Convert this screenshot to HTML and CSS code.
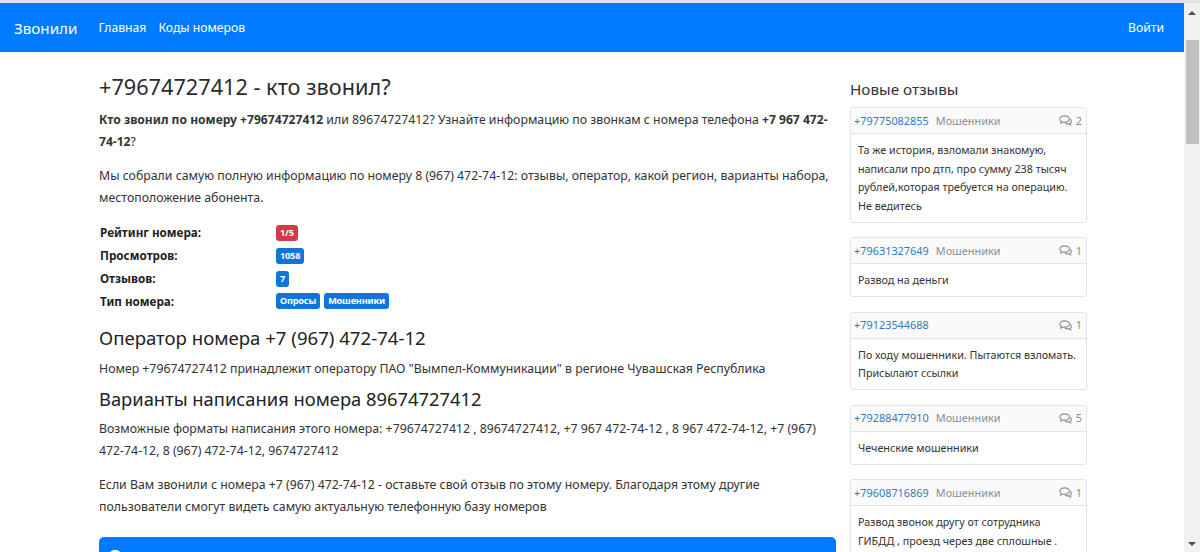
FILE: index.html
```html
<!DOCTYPE html>
<html lang="ru">
<head>
<meta charset="utf-8">
<title>+79674727412 - кто звонил?</title>
<link rel="stylesheet" href="styles.css">
</head>
<body>
<svg class="sprite" width="0" height="0"><defs>
<symbol id="chat" viewBox="0 0 14 12"><path d="M6 1C3 1 .8 2.500.8 4.400c0 1 .6 1.900 1.600 2.600L1.800 8.800 4 7.600c.6.1 1.300.2 2 .2 3 0 5.200-1.500 5.200-3.400S9 1 6 1z" fill="none" stroke="currentColor" stroke-width="1.200"/><path d="M12 4.500c1 .6 1.400 1.400 1.400 2.300 0 .9-.5 1.700-1.300 2.200l.5 1.800-2.200-1.200c-1.500.2-3-.1-4-.9" fill="none" stroke="currentColor" stroke-width="1.200"/></symbol>
</defs></svg>
<div class="window">
  <div class="page">
    <nav class="navbar">
      <a class="brand" href="#">Звонили</a>
      <a class="nav-link" href="#">Главная</a>
      <a class="nav-link" href="#">Коды номеров</a>
      <a class="nav-link login" href="#">Войти</a>
    </nav>
    <div class="content">
      <main class="main">
        <h1>+79674727412 - кто звонил?</h1>
        <p class="intro"><b>Кто звонил по номеру +79674727412</b> или 89674727412? Узнайте информацию по звонкам с номера телефона <b>+7 967 472-74-12</b>?</p>
        <p class="para tight">Мы собрали самую полную информацию по номеру 8 (967) 472-74-12: отзывы, оператор, какой регион, варианты набора, местоположение абонента.</p>
        <div class="facts">
          <b>Рейтинг номера:</b><div><span class="badge red">1/5</span></div>
          <b>Просмотров:</b><div><span class="badge">1058</span></div>
          <b>Отзывов:</b><div><span class="badge">7</span></div>
          <b>Тип номера:</b><div class="badges"><span class="badge">Опросы</span><span class="badge">Мошенники</span></div>
        </div>
        <h2>Оператор номера +7 (967) 472-74-12</h2>
        <p class="line">Номер +79674727412 принадлежит оператору ПАО "Вымпел-Коммуникации" в регионе Чувашская Республика</p>
        <h2 class="second">Варианты написания номера 89674727412</h2>
        <p class="para">Возможные форматы написания этого номера: +79674727412 , 89674727412, +7 967 472-74-12 , 8 967 472-74-12, +7 (967) 472-74-12, 8 (967) 472-74-12, 9674727412</p>
        <p class="para">Если Вам звонили с номера +7 (967) 472-74-12 - оставьте свой отзыв по этому номеру. Благодаря этому другие пользователи смогут видеть самую актуальную телефонную базу номеров</p>
        <div class="cta">Отзывы</div>
      </main>
      <aside class="side">
        <h3>Новые отзывы</h3>
        <article class="card">
          <header><a href="#">+79775082855</a><span class="tag">Мошенники</span><span class="count"><svg class="icon"><use href="#chat"/></svg>2</span></header>
          <p>Та же история, взломали знакомую, написали про дтп, про сумму 238 тысяч рублей,которая требуется на операцию. Не ведитесь</p>
        </article>
        <article class="card">
          <header><a href="#">+79631327649</a><span class="tag">Мошенники</span><span class="count"><svg class="icon"><use href="#chat"/></svg>1</span></header>
          <p>Развод на деньги</p>
        </article>
        <article class="card">
          <header><a href="#">+79123544688</a><span class="count"><svg class="icon"><use href="#chat"/></svg>1</span></header>
          <p>По ходу мошенники. Пытаются взломать. Присылают ссылки</p>
        </article>
        <article class="card">
          <header><a href="#">+79288477910</a><span class="tag">Мошенники</span><span class="count"><svg class="icon"><use href="#chat"/></svg>5</span></header>
          <p>Чеченские мошенники</p>
        </article>
        <article class="card">
          <header><a href="#">+79608716869</a><span class="tag">Мошенники</span><span class="count"><svg class="icon"><use href="#chat"/></svg>1</span></header>
          <p>Развод звонок другу от сотрудника ГИБДД , проезд через две сплошные .</p>
        </article>
      </aside>
    </div>
  </div>
  <div class="scrollbar">
    <span class="arrow up"></span>
    <span class="thumb"></span>
    <span class="arrow down"></span>
  </div>
</div>
</body>
</html>
```
FILE: styles.css
```css
* { box-sizing: border-box; }
html, body { margin: 0; height: 552px; overflow: hidden; }
body { font-family: "Noto Sans", "Open Sans", sans-serif; font-size: 12.3px; line-height: 22px; color: #333; background: #fff; }
.sprite { position: absolute; }
.window { display: flex; height: 552px; border-top: 3px solid #dfe3e8; }
.page { flex: 1; min-width: 0; overflow: hidden; }
.scrollbar { width: 16px; background: #f1f1f1; display: flex; flex-direction: column; align-items: center; padding: 8px 0 6px; }
.thumb { width: 13px; height: 104px; margin-top: 25px; margin-left: 1px; background: #c1c1c1; }
.arrow { width: 0; height: 0; border-left: 4px solid transparent; border-right: 4px solid transparent; }
.arrow.up { border-bottom: 4px solid #505050; }
.arrow.down { border-top: 4px solid #505050; margin-top: auto; }
.navbar { display: flex; align-items: center; height: 49px; background: #007bff; padding: 0 20px 0 14px; }
.navbar a { color: #fff; text-decoration: none; }
.brand { font-size: 15.2px; margin-right: 21px; }
.nav-link { margin-right: 12px; font-size: 12.2px; }
.login { margin: 0 0 0 auto; }
.content { display: grid; grid-template-columns: 737px 237px; column-gap: 14px; padding: 0 0 0 99px; }
.main { padding-top: 19px; }
h1 { margin: 0 0 6px; font-size: 21.7px; line-height: 32px; font-weight: 400; color: #2b2b2b; }
.intro b { font-size: 12.1px; }
.intro, .para { margin: 0 0 12px; }
.para.tight { margin-bottom: 11px; }
.facts { display: grid; grid-template-columns: 176px 1fr; grid-auto-rows: 23px; align-items: center; margin: 0 0 13px 1px; color: #222; font-size: 11.7px; }
.badges { display: flex; gap: 4px; }
.badge { display: inline-block; background: #0f75dc; color: #fff; font-size: 9.2px; letter-spacing: -.2px; font-weight: 700; line-height: 16px; padding: 0 4px; border-radius: 3px; vertical-align: middle; }
.badge.red { background: #d13b4c; }
h2 { margin: 0 0 7px; font-size: 18.6px; line-height: 26px; font-weight: 400; color: #222; }
.line { margin: 0 0 6px; }
.second { font-size: 18.35px; margin-bottom: 6px; }
.cta { margin-top: 19px; height: 60px; padding: 6px 9px; border-radius: 5px 5px 0 0; background: #007bff; color: #fff; font-size: 18px; font-weight: 700; line-height: 26px; }
.side { padding-top: 24px; }
h3 { margin: 0 0 5px; font-size: 15.3px; line-height: 26px; font-weight: 400; color: #333; }
.card { border: 1px solid #e3e3e3; border-radius: 3px; margin-bottom: 14.6px; overflow: hidden; }
.card header { display: flex; align-items: center; height: 26px; padding: 0 4px 0 3px; background: #fafafa; border-bottom: 1px solid #e3e3e3; font-size: 10.9px; }
.card a { color: #337ab7; text-decoration: none; }
.tag { margin-left: 7px; color: #8a8f94; }
.count { margin-left: auto; display: flex; align-items: center; gap: 4px; color: #8a8f94; }
.icon { width: 13px; height: 11px; }
.card p { margin: 0; padding: 7px 7px 6.5px; font-size: 10.75px; line-height: 18.5px; color: #333; }
```
